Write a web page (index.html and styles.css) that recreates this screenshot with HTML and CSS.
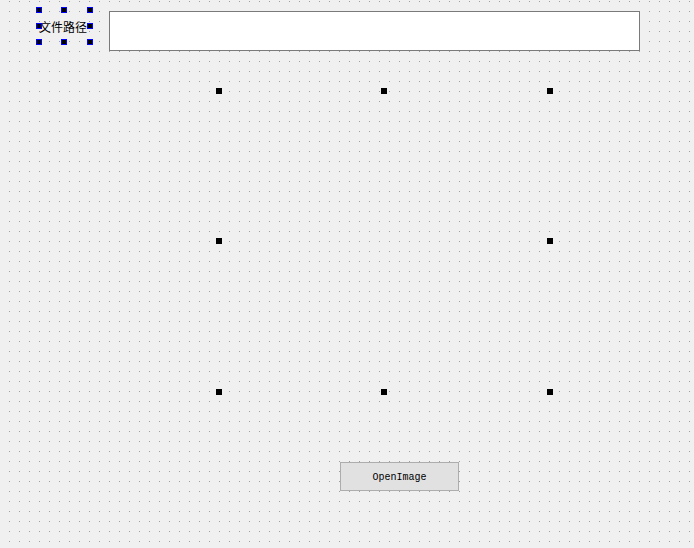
FILE: index.html
```html
<!DOCTYPE html>
<html lang="zh">
<head>
  <meta charset="utf-8" />
  <title>Form</title>
  <link rel="stylesheet" href="styles.css">
</head>
<body>
  <div class="form">
    <div class="top-row">
      <div class="path-label">
        文件路径
        <span class="handle sel h-tl"></span>
        <span class="handle sel h-tc"></span>
        <span class="handle sel h-tr"></span>
        <span class="handle sel h-ml"></span>
        <span class="handle sel h-mr"></span>
        <span class="handle sel h-bl"></span>
        <span class="handle sel h-bc"></span>
        <span class="handle sel h-br"></span>
      </div>
      <input class="path-edit" type="text" />
    </div>

    <div class="image-area">
      <span class="handle h-tl"></span>
      <span class="handle h-tc"></span>
      <span class="handle h-tr"></span>
      <span class="handle h-ml"></span>
      <span class="handle h-mr"></span>
      <span class="handle h-bl"></span>
      <span class="handle h-bc"></span>
      <span class="handle h-br"></span>
    </div>

    <button class="open-btn" type="button">OpenImage</button>
  </div>
</body>
</html>
```

FILE: styles.css
```css
* {
  margin: 0;
  padding: 0;
  box-sizing: border-box;
}

body {
  width: 694px;
  height: 548px;
  overflow: hidden;
  background: #f0f0f0;
}

/* designer grid: one dot every 10px */
.form {
  display: flex;
  flex-direction: column;
  align-items: flex-start;
  width: 694px;
  height: 548px;
  background-color: #f0f0f0;
  background-image: url("data:image/svg+xml,%3Csvg xmlns='http://www.w3.org/2000/svg' width='10' height='10' shape-rendering='crispEdges'%3E%3Crect x='9' y='1' width='1' height='1' fill='%23a0a0a0'/%3E%3C/svg%3E");
  background-size: 10px 10px;
}

.top-row {
  display: flex;
  align-items: flex-start;
  gap: 19px;
  padding: 10px 0 0 39px;
}

.path-label {
  position: relative;
  display: flex;
  align-items: center;
  width: 51px;
  height: 32px;
  font-family: "Noto Sans CJK SC", "Noto Sans", sans-serif;
  font-size: 12px;
  color: #000;
  white-space: nowrap;
}

.path-edit {
  width: 531px;
  height: 40px;
  margin-top: 1px;
  border: 1px solid #7a7a7a;
  background: #fff;
  outline: none;
}

.image-area {
  position: relative;
  width: 331px;
  height: 301px;
  margin: 40px 0 0 219px;
}

.handle {
  position: absolute;
  width: 6px;
  height: 6px;
  margin: -3px 0 0 -3px;
  background: #000;
}

.handle.sel {
  border: 1px solid #0000ff;
}

/* odd sizes: round the middle handles down, as the designer does */
.h-tl { left: 0; top: 0; }
.h-tc { left: calc(50% - 0.5px); top: 0; }
.h-tr { left: 100%; top: 0; }
.h-ml { left: 0; top: calc(50% - 0.5px); }
.h-mr { left: 100%; top: calc(50% - 0.5px); }
.h-bl { left: 0; top: 100%; }
.h-bc { left: calc(50% - 0.5px); top: 100%; }
.h-br { left: 100%; top: 100%; }

.open-btn {
  width: 119px;
  height: 29px;
  margin: 70px 0 0 340px;
  padding-top: 2px;
  border: 1px solid #adadad;
  background: #e1e1e1;
  font-family: "Liberation Mono", monospace;
  font-size: 10px;
  color: #000;
}
```
